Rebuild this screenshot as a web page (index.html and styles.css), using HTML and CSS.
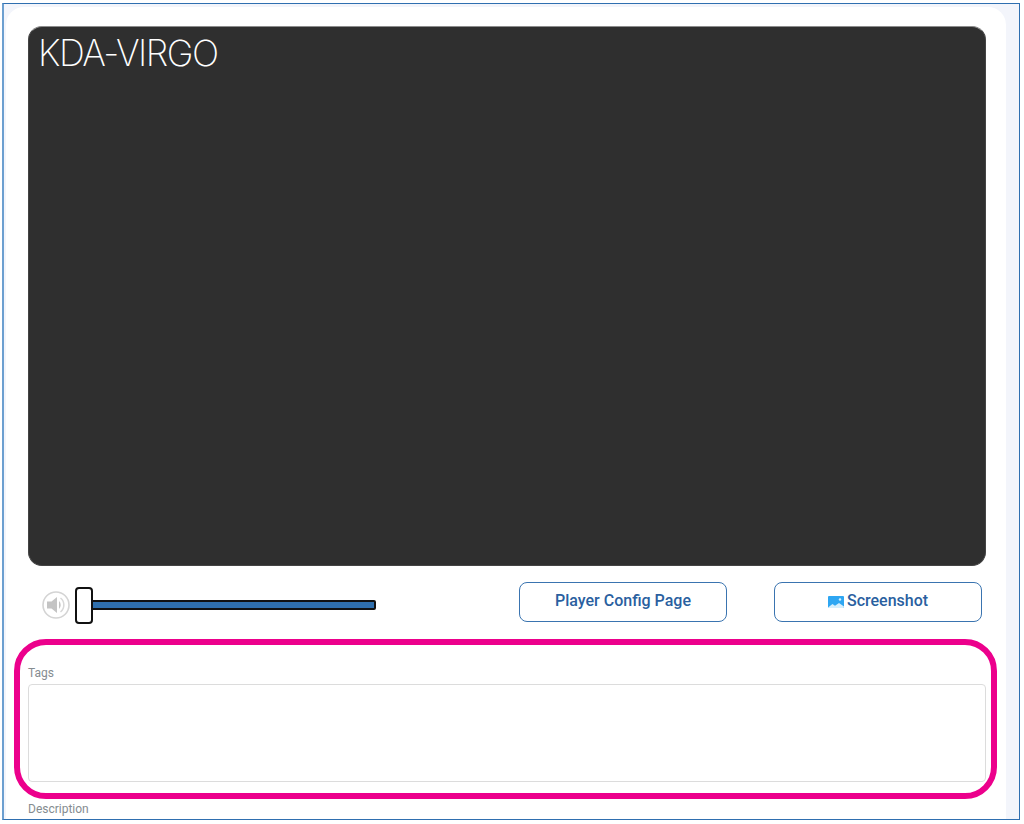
FILE: index.html
```html
<!DOCTYPE html>
<html lang="en">
<head>
<meta charset="utf-8">
<title>KDA-VIRGO</title>
<link rel="stylesheet" href="styles.css">
</head>
<body>
<div class="frame">
  <main class="panel">
    <section class="video"><h1 class="video-title">KDA-VIRGO</h1></section>
    <div class="controls">
      <div class="volume">
        <span class="mute">
          <svg viewBox="0 0 28 28" width="28" height="28" aria-hidden="true">
            <circle cx="14" cy="14" r="13" fill="#fff" stroke="#d4d4d4" stroke-width="1.6"/>
            <path d="M5 10.5h4.5L15 6v16l-5.500-4.500H5z" fill="#c4c4c4"/>
            <path d="M17 10a5.500 5.500 0 0 1 0 8z" fill="#c4c4c4"/>
            <path d="M18.500 7a9 9 0 0 1 0 14" fill="none" stroke="#d8d8d8" stroke-width="1.500"/>
          </svg>
        </span>
        <div class="slider"><span class="thumb"></span></div>
      </div>
      <div class="actions">
        <button class="btn" type="button">Player Config Page</button>
        <button class="btn" type="button">
          <svg class="btn-icon" viewBox="0 0 16 12" width="16" height="12" aria-hidden="true">
            <rect width="16" height="12" rx="1" fill="#2ea6f2"/>
            <path d="M0 11.500l4.500-3.500 2.500 1.800L11 7l5 3.500V11a1 1 0 0 1-1 1H1a1 1 0 0 1-1-.5z" fill="#d5eefc"/>
            <circle cx="12" cy="3.500" r="1.200" fill="#d5eefc"/>
          </svg>Screenshot
        </button>
      </div>
    </div>
    <div class="field tags-field">
      <label class="field-label">Tags</label>
      <div class="tags-box"></div>
    </div>
    <div class="field">
      <label class="field-label">Description</label>
    </div>
  </main>
  <div class="highlight"></div>
</div>
</body>
</html>
```
FILE: styles.css
```css
* { box-sizing: border-box; }
html, body { margin: 0; height: 100%; background: #fff; }
body { padding: 3px 4px 4px 2px; font-family: Roboto, "Liberation Sans", sans-serif; }
.frame {
  position: relative;
  height: 817px;
  overflow: hidden;
  border: 1px solid #2f6fb0;
  border-left: 2px solid #6c9fd0;
  background: #f3f5fb;
  padding: 3px 13px 0 2px;
}
.panel {
  height: 100%;
  overflow: hidden;
  background: #fff;
  border-radius: 18px 18px 0 0;
  padding: 19px 20px 0 22px;
}
.video {
  height: 540px;
  background: #2f2f2f;
  border: 1px solid #444;
  border-top-color: #8c8c8c;
  border-radius: 14px;
  padding: 5px 9px;
}
.video-title {
  margin: 0;
  font-family: Inter, "Liberation Sans", sans-serif;
  font-weight: 200;
  font-size: 36px;
  line-height: 42px;
  letter-spacing: -1.5px;
  color: #fff;
}
.controls {
  display: flex;
  justify-content: space-between;
  align-items: flex-start;
  height: 100px;
  padding: 16px 4px 0 14px;
}
.volume { display: flex; align-items: center; height: 40px; margin-top: 3px; }
.mute { display: block; width: 28px; height: 28px; margin-right: 5px; }
.mute svg { display: block; }
.slider {
  position: relative;
  width: 301px;
  height: 10px;
  background: #2f6fad;
  border: 2px solid #111;
  border-radius: 2px;
}
.thumb {
  position: absolute;
  left: -2px;
  top: -15px;
  width: 18px;
  height: 37px;
  background: #fff;
  border: 2px solid #111;
  border-radius: 4px;
}
.actions { display: flex; gap: 47px; }
.btn {
  display: flex;
  align-items: center;
  justify-content: center;
  width: 208px;
  height: 40px;
  padding: 0 0 3px;
  background: #fff;
  border: 1.5px solid #3a74b0;
  border-radius: 8px;
  font-family: Roboto, "Liberation Sans", sans-serif;
  font-weight: 500;
  font-size: 16px;
  color: #2a5f9f;
}
.btn-icon { margin: 3px 3px 0 0; }
.field-label {
  display: block;
  font-size: 12px;
  line-height: 14px;
  color: #858c90;
}
.tags-box {
  height: 98px;
  margin-top: 4px;
  background: #fff;
  border: 1px solid #dcdcdc;
  border-radius: 4px;
}
.field + .field { margin-top: 20px; }
.highlight {
  position: absolute;
  left: 10px;
  top: 635px;
  width: 983px;
  height: 160px;
  border: 6px solid #ec008c;
  border-radius: 32px;
  pointer-events: none;
}
```
